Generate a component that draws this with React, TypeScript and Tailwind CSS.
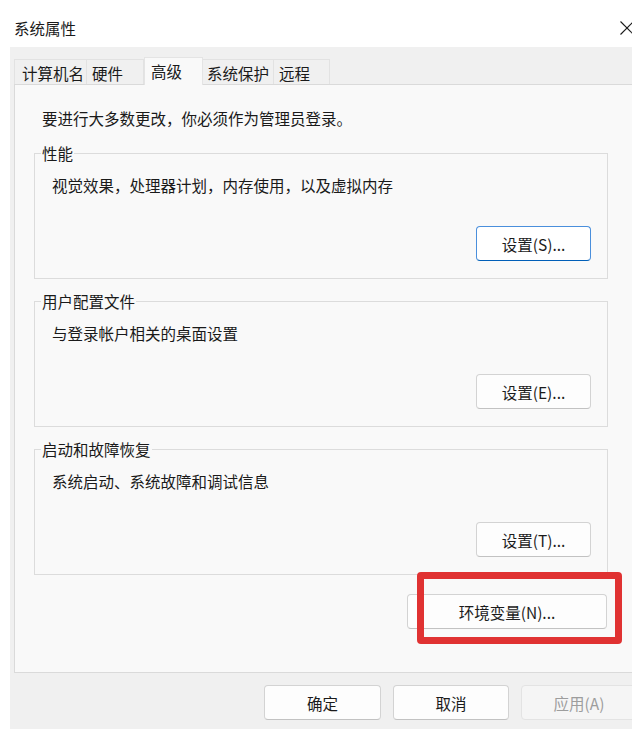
import React from "react";

const font = { fontFamily: '"Microsoft YaHei UI", "Noto Sans CJK SC", "Noto Sans", sans-serif' };

const tabs = [
    { label: "计算机名", w: "w-[73px]", pl: "pl-[7px]" },
    { label: "硬件", w: "w-[57px]", pl: "pl-[5px]" },
    { label: "高级", w: "w-[59px]", pl: "pl-[6px]", active: true },
    { label: "系统保护", w: "w-[71px]", pl: "pl-[4px]" },
    { label: "远程", w: "w-[56px]", pl: "pl-[5px]" },
];

const Button = ({ children, focused, disabled, className = "" }: { children: React.ReactNode; focused?: boolean; disabled?: boolean; className?: string }) => {
    let look = "bg-[#fdfdfd] border-[#d3d3d3] border-b-[#c2c2c2] text-[#1b1b1b]";
    if (focused) look = "bg-white border-[#4a8fdc] border-b-[#005fb8] text-[#1b1b1b]";
    if (disabled) look = "bg-[#f5f5f5] border-[#e3e3e3] text-[#9d9d9d]";
    return (
        <div className={`flex items-center justify-center h-[35px] rounded-[4px] border text-[15.5px] leading-[20px] ${look} ${className}`}>
            {children}
        </div>
    );
};

const GroupBox = ({ title, text, button }: { title: string; text: string; button: React.ReactNode }) => (
    <div className="flex flex-col w-[574px] h-[126px] border border-[#dcdcdc]">
        {/* legend sits on the top border */}
        <span className="block w-fit -mt-[11px] ml-[6px] px-[1px] bg-[#f9f9f9] text-[15.5px] leading-[20px]">{title}</span>
        <p className="mt-[12px] pl-[17px] text-[15.5px] leading-[20px]">{text}</p>
        <div className="mt-[31px] flex justify-end pr-[16px]">{button}</div>
    </div>
);

export default function App() {
    return (
        <div className="relative w-[632px] h-[735px] overflow-hidden bg-white text-[#1a1a1a]" style={font}>
            {/* title bar */}
            <div className="flex items-center justify-between h-[47px] pl-[14px] pt-[9px]">
                <span className="text-[15.5px] leading-[20px]">系统属性</span>
                <svg width="16" height="16" viewBox="0 0 16 16" className="-mr-[3px]" fill="none" stroke="#1a1a1a" strokeWidth="1.1">
                    <line x1="1.5" y1="1.5" x2="14.5" y2="14.5" />
                    <line x1="14.5" y1="1.5" x2="1.5" y2="14.5" />
                </svg>
            </div>

            {/* dialog body */}
            <div className="ml-[10px] w-[650px] h-[682px] bg-[#f0f0f0] pt-[10px]">
                <div className="flex items-end h-[27px] pl-[4px]">
                    {tabs.map((t) =>
                        t.active ? (
                            <div key={t.label} className={`${t.w} ${t.pl} h-[28px] -mb-[1px] relative z-10 bg-[#f9f9f9] border-x border-t border-[#e4e4e4] text-[15.5px] leading-[26px]`}>
                                {t.label}
                            </div>
                        ) : (
                            <div key={t.label} className={`${t.w} ${t.pl} h-[25px] bg-[#f0f0f0] border-r border-t border-[#e2e2e2] first:border-l text-[15.5px] leading-[27px]`}>
                                {t.label}
                            </div>
                        )
                    )}
                </div>

                <div className="ml-[4px] w-[640px] h-[589px] border border-[#dadada] bg-[#f9f9f9] pl-[19px] pt-[23px]">
                    <p className="text-[15.5px] leading-[20px] pl-[8px]">要进行大多数更改，你必须作为管理员登录。</p>
                    <div className="mt-[25px] flex flex-col gap-[22px]">
                        <GroupBox title="性能" text="视觉效果，处理器计划，内存使用，以及虚拟内存" button={<Button focused className="w-[115px]">设置(S)...</Button>} />
                        <GroupBox title="用户配置文件" text="与登录帐户相关的桌面设置" button={<Button className="w-[115px]">设置(E)...</Button>} />
                        <GroupBox title="启动和故障恢复" text="系统启动、系统故障和调试信息" button={<Button className="w-[115px]">设置(T)...</Button>} />
                    </div>
                    <div className="w-[574px] mt-[19px] flex justify-end pr-[1px]">
                        <Button className="w-[200px]">环境变量(N)...</Button>
                    </div>
                </div>

                <div className="flex gap-[12px] pl-[254px] mt-[12px]">
                    <Button className="w-[117px]">确定</Button>
                    <Button className="w-[116px]">取消</Button>
                    <Button disabled className="w-[116px]">应用(A)</Button>
                </div>
            </div>

            {/* red highlight annotation */}
            <div className="absolute left-[417px] top-[572px] w-[205px] h-[72px] border-[7px] border-[#e03232] rounded-[4px]" />
        </div>
    );
}
